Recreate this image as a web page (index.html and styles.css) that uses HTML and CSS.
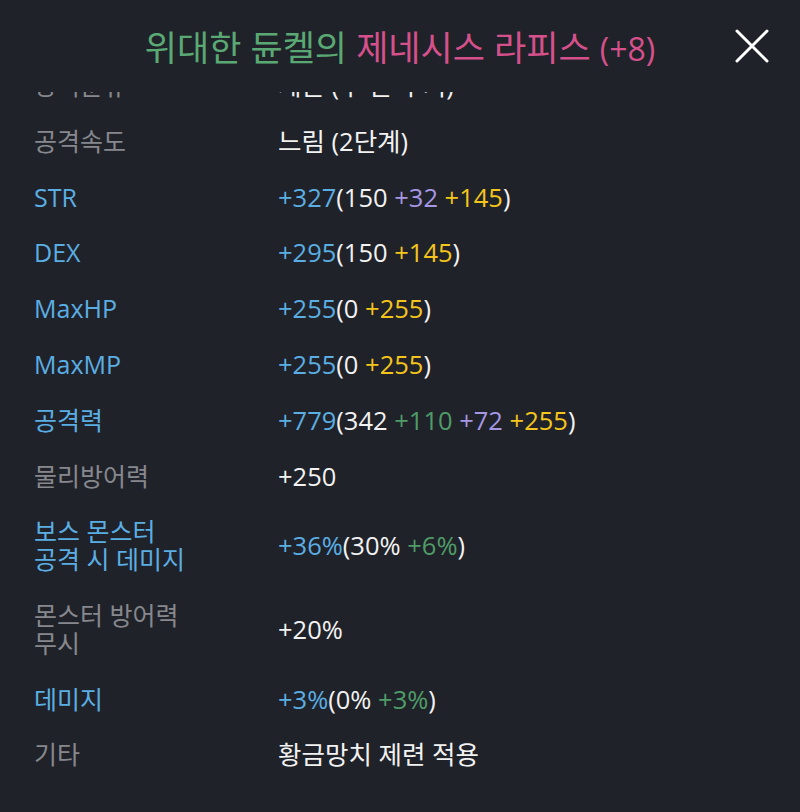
FILE: index.html
```html
<!DOCTYPE html>
<html lang="ko">

<head>
    <meta charset="UTF-8">
    <meta name="viewport" content="width=device-width, initial-scale=1">
    <title>아이템 정보</title>
    <link rel="stylesheet" href="styles.css">
</head>

<body>
    <div class="sheet">
        <header class="sheet-head">
            <span></span>
            <h1 class="item-title">
                <span class="t-green">위대한 듄켈의</span>
                <span class="t-pink">제네시스 라피스 <span class="enhance">(+8)</span></span>
            </h1>
            <button class="close-btn" aria-label="닫기">
                <svg width="34" height="34" viewBox="0 0 34 34">
                    <path d="M2 2 L32 32 M32 2 L2 32" stroke="#fff" stroke-width="3" stroke-linecap="round" fill="none"/>
                </svg>
            </button>
        </header>

        <div class="stats">
            <ul class="stat-list">
                <li class="stat-row">
                    <span class="stat-label">장비분류</span>
                    <span class="stat-value">제논 (두 손 무기)</span>
                </li>
                <li class="stat-row">
                    <span class="stat-label">공격속도</span>
                    <span class="stat-value">느림 (2단계)</span>
                </li>
                <li class="stat-row">
                    <span class="stat-label blue">STR</span>
                    <span class="stat-value"><span class="blue">+327</span>(150 <span class="purple">+32</span> <span class="yellow">+145</span>)</span>
                </li>
                <li class="stat-row">
                    <span class="stat-label blue">DEX</span>
                    <span class="stat-value"><span class="blue">+295</span>(150 <span class="yellow">+145</span>)</span>
                </li>
                <li class="stat-row">
                    <span class="stat-label blue">MaxHP</span>
                    <span class="stat-value"><span class="blue">+255</span>(0 <span class="yellow">+255</span>)</span>
                </li>
                <li class="stat-row">
                    <span class="stat-label blue">MaxMP</span>
                    <span class="stat-value"><span class="blue">+255</span>(0 <span class="yellow">+255</span>)</span>
                </li>
                <li class="stat-row">
                    <span class="stat-label blue">공격력</span>
                    <span class="stat-value"><span class="blue">+779</span>(342 <span class="green">+110</span> <span class="purple">+72</span> <span class="yellow">+255</span>)</span>
                </li>
                <li class="stat-row">
                    <span class="stat-label">물리방어력</span>
                    <span class="stat-value">+250</span>
                </li>
                <li class="stat-row">
                    <span class="stat-label blue">보스 몬스터<br>공격 시 데미지</span>
                    <span class="stat-value"><span class="blue">+36%</span>(30% <span class="green">+6%</span>)</span>
                </li>
                <li class="stat-row">
                    <span class="stat-label">몬스터 방어력<br>무시</span>
                    <span class="stat-value">+20%</span>
                </li>
                <li class="stat-row">
                    <span class="stat-label blue">데미지</span>
                    <span class="stat-value"><span class="blue">+3%</span>(0% <span class="green">+3%</span>)</span>
                </li>
                <li class="stat-row">
                    <span class="stat-label">기타</span>
                    <span class="stat-value">황금망치 제련 적용</span>
                </li>
            </ul>
        </div>
    </div>
</body>

</html>
```

FILE: styles.css
```css
body {
    margin: 0;
    padding: 0;
    background-color: #202229;
    color: #f2f2f2;
    font-family: "Open Sans", "Noto Sans CJK KR", sans-serif;
}

.sheet {
    height: 812px;
    display: flex;
    flex-direction: column;
    overflow: hidden;
}

.sheet-head {
    height: 92px;
    flex-shrink: 0;
    display: grid;
    grid-template-columns: 1fr auto 1fr;
    align-items: center;
    background-color: #202229;
    position: relative;
    z-index: 1;
}

.item-title {
    margin: 0 0 2px;
    font-size: 35px;
    font-weight: 400;
    white-space: nowrap;
}

.item-title .enhance {
    font-size: 32px;
}

.t-green {
    color: #5aa974;
}

.t-pink {
    color: #d6508b;
}

.close-btn {
    justify-self: end;
    margin-right: 31px;
    padding: 0;
    border: none;
    background: none;
    display: flex;
    cursor: pointer;
}

.stats {
    flex: 1;
    overflow: hidden;
}

/* list is scrolled a little, first row sits under the header */
.stat-list {
    list-style: none;
    margin: -34px 0 0;
    padding: 0;
}

.stat-row {
    display: flex;
    align-items: center;
    padding: 14px 0 14px 34px;
    font-size: 25px;
    line-height: 27.8px;
}

.stat-label {
    width: 244px;
    flex-shrink: 0;
    color: #86888e;
}

.stat-value {
    color: #f2f2f2;
    font-size: 25.5px;
}

.blue {
    color: #5aaee3;
}

.purple {
    color: #a597e3;
}

.yellow {
    color: #f4c51c;
}

.green {
    color: #4f9c68;
}
```
